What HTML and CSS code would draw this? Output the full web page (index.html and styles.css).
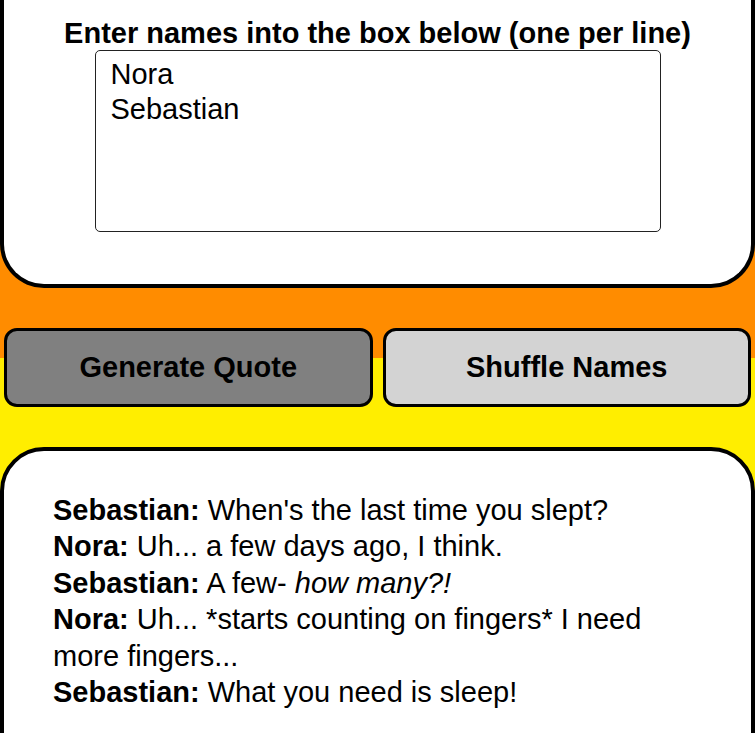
FILE: index.html
```html
<!DOCTYPE html>
<html lang="en">

<head>
  <meta charset="UTF-8">
  <title>Quote Generator</title>
  <link rel="stylesheet" href="styles.css">
</head>

<body>
  <div class="card names-card">
    <h2>Enter names into the box below (one per line)</h2>
    <textarea id="names" class="names-box">Nora
Sebastian</textarea>
  </div>

  <div class="actions">
    <button class="btn btn-generate" onclick="generateQuote()">Generate Quote</button>
    <button class="btn btn-shuffle" onclick="shuffleNames()">Shuffle Names</button>
  </div>

  <div class="card quote-card">
    <p id="quote" class="quote">
      <b>Sebastian:</b> When's the last time you slept?<br>
      <b>Nora:</b> Uh... a few days ago, I think.<br>
      <b>Sebastian:</b> A few- <i>how many?!</i><br>
      <b>Nora:</b> Uh... *starts counting on fingers* I need more fingers...<br>
      <b>Sebastian:</b> What you need is sleep!
    </p>
  </div>

  <script>
    function getNames() {
      return document.getElementById('names').value
        .split('\n')
        .map(n => n.trim())
        .filter(n => n);
    }

    function generateQuote() {
      const names = getNames();
      if (names.length < 2) {
        alert('Please enter at least two names.');
        return;
      }
      const a = names[0];
      const b = names[1];
      document.getElementById('quote').innerHTML =
        `<b>${b}:</b> When's the last time you slept?<br>` +
        `<b>${a}:</b> Uh... a few days ago, I think.<br>` +
        `<b>${b}:</b> A few- <i>how many?!</i><br>` +
        `<b>${a}:</b> Uh... *starts counting on fingers* I need more fingers...<br>` +
        `<b>${b}:</b> What you need is sleep!`;
    }

    function shuffleNames() {
      const names = getNames();
      for (let i = names.length - 1; i > 0; i--) {
        const j = Math.floor(Math.random() * (i + 1));
        [names[i], names[j]] = [names[j], names[i]];
      }
      document.getElementById('names').value = names.join('\n');
    }
  </script>
</body>

</html>
```

FILE: styles.css
```css
body {
  font-family: "Liberation Sans", Arial, Helvetica, sans-serif;
  margin: 0;
  padding: 0;
  color: #000;
  background: linear-gradient(to bottom, #ff8c00 0, #ff8c00 358px, #ffee00 358px);
  min-height: 100vh;
  overflow: hidden;
}

.card {
  background-color: #fff;
  border: 4px solid #000;
  box-sizing: border-box;
}

.names-card {
  border-top: none;
  border-radius: 0 0 44px 44px;
  padding: 17px 20px 52px;
  display: flex;
  flex-direction: column;
  align-items: center;
}

h2 {
  margin: 0;
  font-size: 29px;
  line-height: 33px;
  font-weight: bold;
  text-align: center;
  white-space: nowrap;
}

.names-box {
  width: 566px;
  height: 182px;
  box-sizing: border-box;
  padding: 6px 15px;
  border: 1.5px solid #222;
  border-radius: 5px;
  font-family: inherit;
  font-size: 29px;
  line-height: 35px;
  resize: none;
  outline: none;
}

.actions {
  display: flex;
  gap: 10px;
  padding: 40px 4px;
}

.btn {
  flex: 1;
  height: 79px;
  border: 3px solid #000;
  border-radius: 13px;
  font-family: inherit;
  font-size: 29px;
  font-weight: bold;
  color: #000;
  cursor: pointer;
}

.btn-generate {
  background-color: #808080;
}

.btn-shuffle {
  background-color: #d3d3d3;
}

.btn:active {
  transform: translateY(1px);
}

.quote-card {
  border-radius: 44px 44px 0 0;
  padding: 41px 49px 60px;
}

.quote {
  margin: 0;
  font-size: 29px;
  line-height: 36.4px;
}
```
